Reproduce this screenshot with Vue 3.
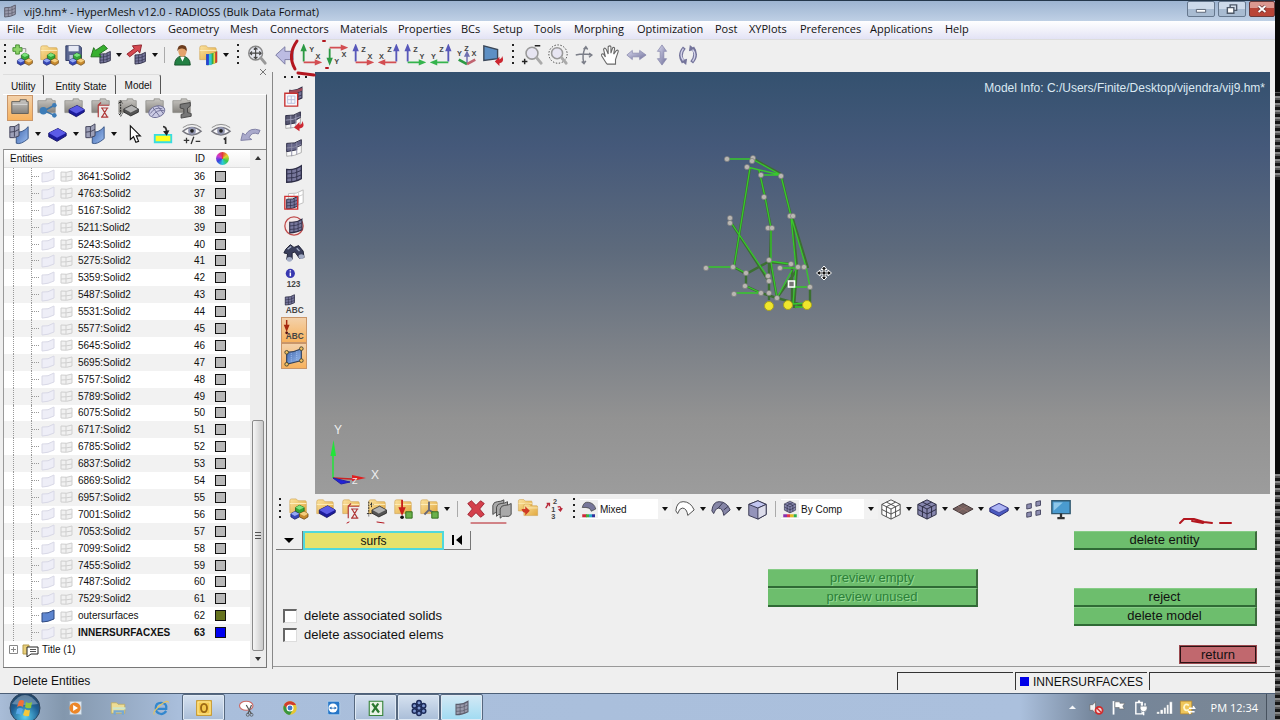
<script setup>
import { h, ref } from 'vue'

const menus = ['File', 'Edit', 'View', 'Collectors', 'Geometry', 'Mesh', 'Connectors', 'Materials', 'Properties', 'BCs', 'Setup', 'Tools', 'Morphing', 'Optimization', 'Post', 'XYPlots', 'Preferences', 'Applications', 'Help']

// Letters drawn on top of an icon: [text, x, y, class]
const letters = {
  'view-xy': [['Y', 10, 9, 'ax'], ['X', 17, 16, 'ax']],
  'view-yx': [['Y', 9, 22, 'ax'], ['X', 17, 14, 'ax']],
  'view-xz': [['Z', 10, 9, 'ax'], ['X', 17, 16, 'ax']],
  'view-zx': [['Z', 10, 9, 'ax'], ['X', 1, 16, 'ax']],
  'view-yz': [['Z', 10, 9, 'ax'], ['Y', 17, 16, 'ax']],
  'view-zy': [['Z', 10, 9, 'ax'], ['Y', 1, 16, 'ax']],
  'view-iso': [['Z', 9, 8, 'ax'], ['Y', 1, 13, 'ax'], ['X', 17, 13, 'ax']],
  'info-num': [['123', 4, 22, 'num']],
  'mesh-abc': [['ABC', 3, 22, 'num']],
  'load-abc': [['ABC', 3, 22, 'num']],
  renumber: [['2', 11, 7, 'ax'], ['1', 9, 15, 'ax'], ['3', 9, 23, 'ax']],
}
const Icon = (props) => h('svg', { viewBox: '0 0 24 24' }, [
  h('use', { href: '#' + props.name }),
  ...(letters[props.name] || []).map(([t, x, y, c]) => h('text', { x, y, class: c }, t)),
])
Icon.props = ['name']

const topTools = ['|grip', 'new-model', 'open-model', 'save-model', 'import', '|arrow', 'export', '|arrow', '|sep', 'user', 'load-results', '|arrow', '|grip', 'fit', 'back', 'view-xy', 'view-yx', 'view-xz', 'view-zx', 'view-yz', 'view-zy', 'view-iso', 'reverse-view', '|grip', 'zoom-in-out', 'zoom-circle', 'rotate', 'pan', 'arrows-h', 'arrows-v', 'spin']
const browserViews = ['folder', 'folder-share', 'folder-comp', 'folder-load', 'folder-prop', 'folder-mat', 'folder-beam']
const browserTools = ['surf-mesh', '|arrow', 'comp', '|arrow', 'surf-mesh', '|arrow', 'pointer', 'highlight', 'eye-pm', 'eye-one', 'undo']
const sideTools = ['mask', 'mask-reverse', 'mask-adjacent', 'mesh', 'mask-window', 'mesh-circle', 'binoculars', 'info-num', 'mesh-abc', 'load-abc', 'surf-handles']
const displayA = ['|grip', 'new-collector', 'new-comp', 'new-load', 'new-prop', 'new-force', 'new-system', '|arrow', '|sep', 'delete', 'cards', 'organize', 'renumber', '|grip']
const displayB = ['surf-wire', '|arrow', 'surf-shaded', '|arrow', 'cube-face', '|sep']
const displayC = ['cube-wire', '|arrow', 'cube-mesh', '|arrow', 'shell-flat', '|arrow', 'comp-light', '|arrow', 'shrink', 'monitor']

const solidIds = [3641, 4763, 5167, 5211, 5243, 5275, 5359, 5487, 5531, 5577, 5645, 5695, 5757, 5789, 6075, 6717, 6785, 6837, 6869, 6957, 7001, 7053, 7099, 7455, 7487, 7529]
const entities = [
  ...solidIds.map((n, i) => ({ name: `${n}:Solid2`, id: 36 + i, color: 'grey' })),
  { name: 'outersurfaces', id: 62, color: 'olive', shown: true },
  { name: 'INNERSURFACXES', id: 63, color: 'blue', current: true },
]

const taskbar = [
  { icon: 'media', label: 'Media player' },
  { icon: 'explorer', label: 'Explorer' },
  { icon: 'ie', label: 'Internet Explorer' },
  { icon: 'outlook', label: 'Outlook', open: true },
  { icon: 'snip', label: 'Snipping tool' },
  { icon: 'chrome', label: 'Chrome' },
  { icon: 'viewer', label: 'TeamViewer' },
  { icon: 'excel', label: 'Excel', open: true },
  { icon: 'flower', label: 'Meeting', open: true },
  { icon: 'app-mesh', label: 'HyperMesh', open: true, active: true },
]
const tray = ['tray-up', 'tray-mute', 'tray-flag', 'tray-power', 'tray-signal', 'tray-sync']

const joints = [[727, 159], [753, 158], [752, 161], [747, 167], [761, 175], [781, 176], [764, 197], [768, 228], [772, 228], [790, 216], [793, 216], [769, 260], [733, 267], [706, 268], [730, 218], [730, 223], [746, 273], [768, 276], [769, 281], [745, 286], [734, 294], [761, 293], [769, 293], [777, 298], [780, 268], [791, 264], [798, 267], [804, 267], [810, 287]]

const solids = ref(false)
const elems = ref(false)
</script>

<template>
  <svg class="defs" aria-hidden="true">
    <linearGradient id="g-surf" x1="0" y1="0" x2="1" y2="1"><stop offset="0" stop-color="#3f66ad" /><stop offset="1" stop-color="#9dbef0" /></linearGradient>
    <linearGradient id="g-fold" x1="0" y1="0" x2="1" y2="1"><stop offset="0" stop-color="#fbe3a0" /><stop offset="1" stop-color="#e2a83e" /></linearGradient>
    <linearGradient id="g-gfold" x1="0" y1="0" x2="0" y2="1"><stop offset="0" stop-color="#c9c7c3" /><stop offset="1" stop-color="#85827d" /></linearGradient>
    <linearGradient id="g-lav" x1="0" y1="0" x2="1" y2="1"><stop offset="0" stop-color="#d8d8ee" /><stop offset="1" stop-color="#70709a" /></linearGradient>
    <symbol id="mesh" viewBox="0 0 24 24"><path d="M4 7Q13 8 20 3V17Q13 21 4 21Z" fill="#77779c" stroke="#2d2d46" stroke-width="1.4" /><path d="M4 12Q13 12 20 8M4 16.500Q13 17 20 13M9.500 7V21M15 6V19" fill="none" stroke="#30304c" /></symbol>
    <symbol id="app-mesh" viewBox="0 0 24 24"><path d="M4 7Q13 8 20 3V17Q13 21 4 21Z" fill="#999aab" stroke="#5b5c6b" stroke-width="1.400" /><path d="M4 12Q13 12 20 8M4 16.500Q13 17 20 13M9.500 7V21M15 6V19" fill="none" stroke="#5b5c6b" /></symbol>
    <symbol id="fold" viewBox="0 0 24 24"><path d="M3 4Q3 2 5 2H10L12 4H20Q21 4 21 6V17H3Z" fill="url(#g-fold)" stroke="#c9983f" stroke-width=".6" /><path d="M3 7H21" stroke="#fff0c0" /></symbol>
    <symbol id="gfold" viewBox="0 0 24 24"><path d="M2 4H11V2H17L18 4H21V17H2Z" fill="url(#g-gfold)" stroke="#8b8985" stroke-width=".8" /></symbol>
    <symbol id="comp" viewBox="0 0 24 24"><path d="M3 11L13 6L22 11V14L12 20L3 15Z" fill="#1c1c9c" stroke="#101060" /><path d="M3 11L13 6L22 11L12 16Z" fill="#5b5be6" /></symbol>
    <symbol id="comp-light" viewBox="0 0 24 24"><path d="M2 11L12 6L22 11V14L12 20L2 15Z" fill="#4a5ac0" stroke="#20206b" /><path d="M2 11L12 6L22 11L12 16Z" fill="#aeb6f4" stroke="#30308a" stroke-width=".7" /></symbol>
    <symbol id="gbox" viewBox="0 0 24 24"><path d="M3 11L13 6L22 11V15L12 20L3 15Z" fill="#555" stroke="#222" /><path d="M3 11L13 6L22 11L12 16Z" fill="#b3b3b3" stroke="#333" stroke-width=".6" /></symbol>
    <symbol id="tri" viewBox="0 0 24 20"><path d="M7 4L12 1L18 4V9L12 12L7 9Z" fill="#35a535" stroke="#145c14" /><path d="M7 4L12 7L18 4L12 1Z" fill="#7ce27c" /><path d="M1 12L6 9L12 12V16L6 19L1 16Z" fill="#3547b8" stroke="#1d2566" /><path d="M1 12L6 15L12 12L6 9Z" fill="#94a8f2" /><path d="M12 12L18 9L23 12V16L18 19L12 16Z" fill="#c78a2e" stroke="#6e4714" /><path d="M12 12L18 15L23 12L18 9Z" fill="#f5ce7d" /></symbol>
    <symbol id="new-model" viewBox="0 0 24 24"><use href="#tri" x="5" y="9" width="18" height="15" /><path d="M4 1H8V4H11V8H8V11H4V8H1V4H4Z" fill="#8ed46a" stroke="#3c8a28" /><path d="M11 5H15V9" fill="none" stroke="#888" /></symbol>
    <symbol id="open-model" viewBox="0 0 24 24"><use href="#fold" /><use href="#tri" x="5" y="9" width="18" height="15" /></symbol>
    <symbol id="save-model" viewBox="0 0 24 24"><path d="M2 2H17L19 4V18H2Z" fill="#5a6690" stroke="#2e3860" /><path d="M5 2H16V8H5Z" fill="#e6e9f4" /><path d="M6 12H15V18H6Z" fill="#b9c2dc" /><use href="#tri" x="5" y="9" width="18" height="15" /></symbol>
    <symbol id="import" viewBox="0 0 24 24"><use href="#mesh" x="8" y="6" width="17" height="17" /><path d="M15 1L19 5L10 11L12 14L1 14L4 4L6 7Z" fill="#37b02f" stroke="#1c6c18" /></symbol>
    <symbol id="export" viewBox="0 0 24 24"><use href="#mesh" x="7" y="7" width="17" height="17" /><path d="M1 11L9 5L7 2L17 1L15 10L13 7L4 14Z" fill="#d44850" stroke="#8c1f28" /></symbol>
    <symbol id="user" viewBox="0 0 24 24"><path d="M4 23Q4 14 12 13Q21 14 21 23Z" fill="#238044" stroke="#145028" /><path d="M10 14L12.500 19L15 14Z" fill="#fff" /><ellipse cx="12.500" cy="8" rx="4.500" ry="6" fill="#e3a36c" /><path d="M7 8Q7 1 12 1Q18 1 17 8Q15 4 11 5Q8 5 7 8" fill="#6c3d1e" /></symbol>
    <symbol id="load-results" viewBox="0 0 24 24"><use href="#fold" /><path d="M10 11Q15 12 22 8V20Q15 24 10 23Z" fill="#2dae4a" /><path d="M10 11H13V23H10Z" fill="#2a3fd8" /><path d="M13 11L16 11V23H13Z" fill="#36c4d4" /><path d="M18 10L20 9V21L18 22Z" fill="#f0d23c" /><path d="M20 9L22 8V20L20 21Z" fill="#d8352d" /></symbol>
    <symbol id="fit" viewBox="0 0 24 24"><circle cx="10.500" cy="10" r="7.500" fill="#e4e6ef" stroke="#888" stroke-width="1.600" /><path d="M16 15L21 21" stroke="#999" stroke-width="3" stroke-linecap="round" /><path d="M10.500 4V16M4.500 10H16.500M8.500 6L10.500 4L12.500 6M8.500 14L10.500 16L12.500 14M6.500 8L4.500 10L6.500 12M14.500 8L16.500 10L14.500 12" fill="none" stroke="#444" stroke-width="1.200" /></symbol>
    <symbol id="back" viewBox="0 0 24 24"><path d="M3 12L13 3V8H22V17H13V22Z" fill="#bcbce2" stroke="#77779f" /></symbol>
    <symbol id="view-xy" viewBox="0 0 24 24"><path d="M4 19V4M2 7L4 2L6 7Z" stroke="#2c9a44" fill="#2c9a44" stroke-width="2" /><path d="M4 20H19M17 18L22 20L17 22Z" stroke="#d34e52" fill="#d34e52" stroke-width="1.800" /></symbol>
    <symbol id="view-yx" viewBox="0 0 24 24"><path d="M4 5V18M2 16L4 21L6 16Z" stroke="#2c9a44" fill="#2c9a44" stroke-width="2" /><path d="M4 4H18M17 2L22 4L17 6Z" stroke="#d34e52" fill="#d34e52" stroke-width="1.800" /></symbol>
    <symbol id="view-xz" viewBox="0 0 24 24"><path d="M4 19V4M2 7L4 2L6 7Z" stroke="#5858ba" fill="#5858ba" stroke-width="2" /><path d="M4 20H19M17 18L22 20L17 22Z" stroke="#d34e52" fill="#d34e52" stroke-width="1.800" /></symbol>
    <symbol id="view-zx" viewBox="0 0 24 24"><path d="M20 19V4M18 7L20 2L22 7Z" stroke="#5858ba" fill="#5858ba" stroke-width="2" /><path d="M20 20H5M7 18L2 20L7 22Z" stroke="#d34e52" fill="#d34e52" stroke-width="1.800" /></symbol>
    <symbol id="view-yz" viewBox="0 0 24 24"><path d="M4 19V4M2 7L4 2L6 7Z" stroke="#5858ba" fill="#5858ba" stroke-width="2" /><path d="M4 20H19M17 18L22 20L17 22Z" stroke="#35b44d" fill="#35b44d" stroke-width="1.800" /></symbol>
    <symbol id="view-zy" viewBox="0 0 24 24"><path d="M20 19V4M18 7L20 2L22 7Z" stroke="#5858ba" fill="#5858ba" stroke-width="2" /><path d="M20 20H5M7 18L2 20L7 22Z" stroke="#35b44d" fill="#35b44d" stroke-width="1.800" /></symbol>
    <symbol id="view-iso" viewBox="0 0 24 24"><path d="M12 21V11M10 13L12 9L14 13Z" stroke="#7070b0" fill="#7070b0" stroke-width="1.600" /><path d="M12 22L3 17" stroke="#2c9a44" stroke-width="3" /><path d="M12 22L21 17" stroke="#c06470" stroke-width="3" /></symbol>
    <symbol id="reverse-view" viewBox="0 0 24 24"><path d="M2 2L17 6V16L2 18Z" fill="#5d8fc4" stroke="#3b4758" stroke-width="1.500" /><path d="M14 19L19 14V17Q22 16 22 13Q25 20 19 21V24Z" fill="#cc2630" /></symbol>
    <symbol id="zoom-in-out" viewBox="0 0 24 24"><circle cx="12" cy="10" r="6.500" fill="#e7e5f2" stroke="#999" stroke-width="1.700" /><path d="M17 15L22 21" stroke="#aaa" stroke-width="3" stroke-linecap="round" /><path d="M15 2H21M1 19H7M4 16V22" stroke="#222" stroke-width="1.600" /></symbol>
    <symbol id="zoom-circle" viewBox="0 0 24 24"><circle cx="12" cy="11" r="10" fill="none" stroke="#333" stroke-dasharray="1.500 1.800" /><circle cx="11" cy="10" r="6" fill="#e7e5f2" stroke="#999" stroke-width="1.700" /><path d="M16 15L21 21" stroke="#aaa" stroke-width="3" stroke-linecap="round" /></symbol>
    <symbol id="rotate" viewBox="0 0 24 24"><path d="M14 3Q9 12 12 21M3 12Q12 10 20 12M11.500 6L14 3L16 6M17.500 10L20.500 12L17.500 14.500M9.500 19L12 21.500L14 18.500" fill="none" stroke="#7b7e88" stroke-width="1.600" /></symbol>
    <symbol id="pan" viewBox="0 0 24 24"><path d="M8 21L3 13Q2 10 5 11L7 14L5 6Q6 3 8 6L10 11V3Q12 1 13 3V10L15 4Q17 3 17 5L16 11L19 7Q21 6 21 8L18 17V22H9Z" fill="#fff" stroke="#6a6a6a" stroke-width="1.200" /></symbol>
    <symbol id="arrows-h" viewBox="0 0 24 24"><path d="M2 12L8 7V10H16V7L23 12L16 17V14H8V17Z" fill="url(#g-lav)" stroke="#8686ac" stroke-width=".8" /></symbol>
    <symbol id="arrows-v" viewBox="0 0 24 24"><path d="M12 1L17 8H14V16H17L12 23L7 16H10V8H7Z" fill="url(#g-lav)" stroke="#8686ac" stroke-width=".8" /></symbol>
    <symbol id="spin" viewBox="0 0 24 24"><path d="M8 4Q1 12 7 20M16 20Q23 12 17 4" fill="none" stroke="#74749b" stroke-width="4" /><path d="M4 18L11 16L10 23ZM20 6L13 8L14 1Z" fill="#74749b" /><path d="M7 5Q2 12 7 18M17 19Q22 12 17 6" fill="none" stroke="#d3d3ea" stroke-width="1.500" /></symbol>
    <symbol id="folder" viewBox="0 0 24 24"><path d="M3 5H12V3H19V5H21V18H3Z" fill="url(#g-gfold)" stroke="#5f5d59" /><path d="M4 8H20" stroke="#ddd" /></symbol>
    <symbol id="folder-share" viewBox="0 0 24 24"><use href="#gfold" /><path d="M9 15L20 9M9 15L20 20" stroke="#3d75a8" stroke-width="1.600" /><circle cx="8" cy="15" r="4" fill="#3c7cb8" /><circle cx="20" cy="9" r="2.500" fill="#3c7cb8" /><circle cx="20" cy="20" r="2.500" fill="#3c7cb8" /></symbol>
    <symbol id="folder-comp" viewBox="0 0 24 24"><use href="#gfold" /><use href="#comp" x="4" y="4" width="21" height="21" /></symbol>
    <symbol id="loadg" viewBox="0 0 24 24"><path d="M9 22V9H21M9 9L12 6M12 12H20M12 22H20M13 12L19 22M19 12L13 22" fill="none" stroke="#b03a3a" stroke-width="1.300" /></symbol>
    <symbol id="folder-load" viewBox="0 0 24 24"><use href="#gfold" /><path d="M9 9H22V23H9Z" fill="#eee" /><use href="#loadg" /></symbol>
    <symbol id="folder-prop" viewBox="0 0 24 24"><use href="#gfold" /><path d="M4 5V20M2 7L4 4L6 7M2 18L4 21L6 18" stroke="#111" fill="none" stroke-dasharray="2 1" /><use href="#gbox" x="5" y="4" width="20" height="20" /></symbol>
    <symbol id="folder-mat" viewBox="0 0 24 24"><use href="#gfold" /><ellipse cx="14" cy="16" rx="9" ry="6" fill="#cbcbe4" stroke="#6b6b93" transform="rotate(-18 14 16)" /><path d="M7 18Q12 10 20 13M9 21Q14 13 22 15M10 12L17 21M15 10L21 18" stroke="#6b6b93" fill="none" /></symbol>
    <symbol id="folder-beam" viewBox="0 0 24 24"><use href="#gfold" /><path d="M10 8L21 6V10L18 12V17L22 18V21L11 23V19L14 18V13L10 12Z" fill="#777" stroke="#444" /></symbol>
    <symbol id="surf-mesh" viewBox="0 0 24 24"><path d="M9 9Q15 12 22 4V17Q14 24 9 22Z" fill="url(#g-surf)" stroke="#325082" /><path d="M2 4Q8 5 12 1V14Q7 17 2 16Z" fill="#9da0b8" stroke="#3e4056" /><path d="M2 10Q8 10 12 7M7 4V15" fill="none" stroke="#3e4056" /></symbol>
    <symbol id="pointer" viewBox="0 0 24 24"><path d="M8 3V18L11.500 15L14 21L17 20L14.500 14H19Z" fill="#fff" stroke="#111" stroke-width="1.200" /></symbol>
    <symbol id="highlight" viewBox="0 0 24 24"><path d="M3 13H21V21H3Z" fill="#ffff1e" stroke="#38dce2" stroke-width="2" /><path d="M12 4Q16 4 16 11" fill="none" stroke="#333" stroke-width="2" /><path d="M12 9L16 14L19 8Z" fill="#222" /></symbol>
    <symbol id="eye" viewBox="0 0 24 24"><path d="M2 9Q12 1 22 9Q12 17 2 9Z" fill="#f7f7fa" stroke="#77777f" stroke-width="1.500" /><circle cx="12" cy="8.500" r="4.200" fill="#9296b0" /><circle cx="12" cy="8.500" r="2" fill="#222" /><path d="M2 5Q12 -2 22 5" fill="none" stroke="#888" /></symbol>
    <symbol id="eye-pm" viewBox="0 0 24 24"><use href="#eye" /><path d="M3 19H9M6 16V22M14 15L11 23M16 20H21" stroke="#333" stroke-width="1.400" /></symbol>
    <symbol id="eye-one" viewBox="0 0 24 24"><use href="#eye" /><path d="M15 18L17 16.500V23" fill="none" stroke="#333" stroke-width="1.800" /></symbol>
    <symbol id="undo" viewBox="0 0 24 24"><path d="M2 19L4 11L7 13Q12 4 23 8L21 12Q14 9 11 16L14 18Z" fill="#a9a9cb" stroke="#7e7ea3" /></symbol>
    <symbol id="mask" viewBox="0 0 24 24"><use href="#mesh" x="4" y="0" width="20" height="20" /><path d="M7 6Q15 6 21 3V6Q15 9 7 9Z" fill="#a04a58" /><path d="M2 9H16V23H2Z" fill="#f8f8fc" stroke="#c83232" stroke-width="1.500" /><path d="M5 16H13M9 12V20M5 12H13V20H5Z" fill="none" stroke="#b6c0dc" /></symbol>
    <symbol id="mask-reverse" viewBox="0 0 24 24"><path d="M3 5Q12 6 19 1V15Q12 19 3 19Z" fill="#f7f7f7" stroke="#aaa" /><path d="M3 5Q12 6 19 1V7L14 10V13L3 15Z" fill="#55556f" stroke="#2d2d46" /><path d="M3 10Q12 10 19 6M8.500 5V19M14 4V17" fill="none" stroke="#9c9cb8" /><path d="M12 18L18 12V15Q21 15 21 11Q25 18 18 19V22Z" fill="#cc2832" /></symbol>
    <symbol id="mask-adjacent" viewBox="0 0 24 24"><path d="M4 7Q13 8 20 3V17Q13 21 4 21Z" fill="#fbfbfb" stroke="#aaa" /><path d="M4 7Q13 8 20 3V9L15 11V14L4 16Z" fill="#666689" stroke="#2d2d46" /><path d="M4 12Q13 12 20 8M9.500 7V21M15 6V19" fill="none" stroke="#8e8ea6" /></symbol>
    <symbol id="mask-window" viewBox="0 0 24 24"><path d="M6 5Q15 6 22 1V15Q15 19 6 19Z" fill="#fff" stroke="#bbb" /><path d="M6 10Q15 10 22 6M12 5V18M17 4V16" fill="none" stroke="#ccc" /><use href="#mesh" x="1" y="6" width="18" height="18" /><path d="M2 8H16V22H2Z" fill="none" stroke="#d03030" stroke-width="1.500" /></symbol>
    <symbol id="mesh-circle" viewBox="0 0 24 24"><circle cx="12" cy="12" r="10" fill="#f3e9e9" stroke="#bf4b4b" stroke-width="1.400" /><use href="#mesh" x="4" y="2" width="20" height="20" /></symbol>
    <symbol id="binoculars" viewBox="0 0 24 24"><path d="M3 9L8 4L12 7L17 5L22 11L23 18L18 19L13 12L10 13L10 20L4 20L5 14L1 13Z" fill="#3a3f5c" stroke="#1a1d30" /><ellipse cx="7" cy="20" rx="3" ry="2.500" fill="#a4adc6" /><ellipse cx="20" cy="17" rx="3" ry="2.500" fill="#a4adc6" /><path d="M5 9L9 6M15 8L18 11" stroke="#a4adc6" stroke-width="1.500" /></symbol>
    <symbol id="info-num" viewBox="0 0 24 24"><circle cx="8" cy="7" r="5" fill="#3838b0" /><path d="M8 6V10M8 3.500V5" stroke="#fff" stroke-width="1.600" /></symbol>
    <symbol id="mesh-abc" viewBox="0 0 24 24"><use href="#mesh" x="0" y="0" width="15" height="15" /></symbol>
    <symbol id="load-abc" viewBox="0 0 24 24"><path d="M4 1V10M2 7L4 12L6 7Z" stroke="#a5280f" fill="#a5280f" stroke-width="1.600" /><circle cx="4" cy="15" r="1.500" fill="#511" /></symbol>
    <symbol id="surf-handles" viewBox="0 0 24 24"><path d="M4 8Q12 8 20 4V17Q12 19 4 21Z" fill="url(#g-surf)" stroke="#33435e" stroke-width="1.300" /><path d="M9 9V19M15 7V17" stroke="#a8c6f4" stroke-dasharray="1 1" /><g fill="#f0c060" stroke="#443"><circle cx="4" cy="8" r="2" /><circle cx="20" cy="4" r="2" /><circle cx="20" cy="17" r="2" /><circle cx="4" cy="21" r="2" /></g></symbol>
    <symbol id="new-collector" viewBox="0 0 24 24"><use href="#fold" x="-1" y="-1" /><use href="#tri" x="2" y="7" width="21" height="17" /></symbol>
    <symbol id="new-comp" viewBox="0 0 24 24"><use href="#fold" /><use href="#comp" x="3" y="3" width="22" height="22" /></symbol>
    <symbol id="new-load" viewBox="0 0 24 24"><use href="#fold" /><path d="M9 9H22V23H9Z" fill="#eee" /><use href="#loadg" /></symbol>
    <symbol id="new-prop" viewBox="0 0 24 24"><use href="#fold" /><path d="M3 4V20M1 17H6M6 5V10M4.500 7H8" stroke="#222" fill="none" stroke-dasharray="2 1" /><use href="#gbox" x="3" y="4" width="22" height="20" /></symbol>
    <symbol id="new-force" viewBox="0 0 24 24"><use href="#fold" /><path d="M11 2V14M8.500 11L11 17L13.500 11Z" stroke="#c8201c" fill="#c8201c" stroke-width="2" /><circle cx="11" cy="21" r="2" fill="#111" /><path d="M15 15H22V22H15Z" fill="#6ab04a" stroke="#2e6a1c" /></symbol>
    <symbol id="new-system" viewBox="0 0 24 24"><use href="#fold" /><path d="M12 4V13L7 18M12 13L17 16" stroke="#667" fill="none" stroke-width="2" /><path d="M15 15H22V22H15Z" fill="#6ab04a" stroke="#2e6a1c" /></symbol>
    <symbol id="delete" viewBox="0 0 24 24"><path d="M3 6L7 3L12 8L17 3L21 6L16 12L21 18L17 21L12 16L7 21L3 18L8 12Z" fill="#d4404c" stroke="#9c2230" /></symbol>
    <symbol id="cards" viewBox="0 0 24 24"><g fill="#a9a9a9" stroke="#444"><path d="M2 8Q3 4 7 4T14 2V14Q12 17 8 16T2 18Z" /><path d="M6 10Q7 6 11 6T18 4V16Q16 19 12 18T6 20Z" /><path d="M10 12Q11 8 15 8T22 6V18Q20 21 16 20T10 22Z" /></g></symbol>
    <symbol id="organize" viewBox="0 0 24 24"><use href="#fold" x="-1" y="0" width="20" height="20" /><use href="#fold" x="5" y="5" width="20" height="20" /><path d="M5 12H9V9L14 14L9 19V16Q6 16 5 12Z" fill="#cf3a24" /></symbol>
    <symbol id="renumber" viewBox="0 0 24 24"><path d="M3 11L6 6M4 6H7V9M16 10Q20 8 19 13M17 12L19 14L21 11" fill="none" stroke="#b82a3a" stroke-width="1.500" /></symbol>
    <symbol id="surf-wire" viewBox="0 0 24 24"><path d="M2 14Q3 4 10 4Q18 4 22 13L15 19Q14 11 9 11Q6 11 4 17Z" fill="#fff" stroke="#444" /></symbol>
    <symbol id="surf-shaded" viewBox="0 0 24 24"><path d="M2 14Q3 4 10 4Q18 4 22 13L15 19Q14 11 9 11Q6 11 4 17Z" fill="#8585a6" stroke="#33334d" /><path d="M9 11L14 5M15 13L20 9" fill="none" stroke="#33334d" /></symbol>
    <symbol id="cube-face" viewBox="0 0 24 24"><path d="M3 7L13 3L22 7V18L13 23L3 19Z" fill="#9494ba" stroke="#33334d" /><path d="M3 7L13 3L22 7L13 11Z" fill="#c2c6f0" stroke="#33334d" /><path d="M13 11L22 7V18L13 23Z" fill="#dcdcea" stroke="#33334d" /></symbol>
    <symbol id="cube-wire" viewBox="0 0 24 24"><path d="M2 7L12 2L22 7V18L12 23L2 18Z" fill="#fff" stroke="#444" /><path d="M2 7L12 12L22 7M12 12V23M2 12.500L12 17.500L22 12.500M7 4.500L17 9.500V20.500M17 4.500L7 9.500V20.500" fill="none" stroke="#444" /></symbol>
    <symbol id="cube-mesh" viewBox="0 0 24 24"><path d="M2 7L12 2L22 7V18L12 23L2 18Z" fill="#8686ae" stroke="#26263c" /><path d="M2 7L12 12L22 7M12 12V23M2 12.500L12 17.500L22 12.500M7 4.500L17 9.500V20.500M17 4.500L7 9.500V20.500" fill="none" stroke="#26263c" /></symbol>
    <symbol id="shell-flat" viewBox="0 0 24 24"><path d="M1 12L12 6L23 12L12 18Z" fill="#74605f" stroke="#3c2f30" /><path d="M6.500 9L18 15M17 9L6 15" stroke="#8f6f6a" /></symbol>
    <symbol id="shrink" viewBox="0 0 24 24"><g fill="#8c8cb0" stroke="#44445f"><path d="M3 7L8 6V11L3 12ZM13 4L18 3V8L13 9ZM3 16L8 15V20L3 21ZM13 14L18 13V18L13 19Z" /></g></symbol>
    <symbol id="monitor" viewBox="0 0 24 24"><path d="M2 3H22V17H2Z" fill="#4a9bd0" stroke="#31586f" stroke-width="1.500" /><path d="M4 5H14L4 14Z" fill="#8ec8ea" /><path d="M12 17V22M8 22H16" stroke="#333" stroke-width="2.500" /></symbol>
    <symbol id="mode-geom" viewBox="0 0 24 24"><path d="M3 10Q5 2 11 3Q19 4 21 12L15 15Q14 9 3 10Z" fill="#77779a" stroke="#444" /><path d="M3 19H9V23H3Z" fill="#d02838" /><path d="M8 19H12V23H8Z" fill="#3fae41" /><path d="M12 19H16V23H12Z" fill="#28a8cc" /><path d="M16 19H20V23H16Z" fill="#31319c" /></symbol>
    <symbol id="mode-elem" viewBox="0 0 24 24"><use href="#cube-mesh" x="3" y="0" width="18" height="18" /><path d="M3 19H8V23H3Z" fill="#8c31ae" /><path d="M8 19H12V23H8Z" fill="#e63b47" /><path d="M12 19H17V23H12Z" fill="#e5be25" /><path d="M17 19H21V23H17Z" fill="#31b04a" /></symbol>
    <symbol id="media" viewBox="0 0 24 24"><path d="M5 3H21V21H5Z" fill="#dbe6f1" stroke="#93a5b8" /><circle cx="12" cy="12" r="7.500" fill="#ec8628" /><path d="M9.500 8L16 12L9.500 16Z" fill="#fff" /></symbol>
    <symbol id="explorer" viewBox="0 0 24 24"><path d="M3 5H10L12 7H21V19H3Z" fill="#eedd94" stroke="#b9a85d" /><path d="M5 11H22V14H5Z" fill="#cfe6c9" /><path d="M6 15H20V21H17V18H9V21H6Z" fill="#77a8d2" /></symbol>
    <symbol id="ie" viewBox="0 0 24 24"><path d="M19 16Q16 20 12 20Q5 19 5 12Q5 5 12 5Q20 5 19 13H7" fill="none" stroke="#3387ce" stroke-width="3" /><path d="M3 21Q0 18 10 9Q21 0 22 5" fill="none" stroke="#e3c463" stroke-width="1.500" /></symbol>
    <symbol id="outlook" viewBox="0 0 24 24"><path d="M2 2H22V22H2Z" fill="#f4c84d" stroke="#c28e1e" /><path d="M4 4H20V20H4Z" fill="none" stroke="#fff1b0" /><ellipse cx="12" cy="12" rx="4" ry="5.500" fill="none" stroke="#9c6814" stroke-width="2.500" /></symbol>
    <symbol id="snip" viewBox="0 0 24 24"><ellipse cx="11" cy="9" rx="9" ry="6" fill="#fff" stroke="#cc6863" stroke-width="1.500" /><path d="M11 8L18 20M18 8L13 20" stroke="#555" stroke-width="1.600" /><circle cx="18" cy="21" r="2" fill="none" stroke="#555" /><circle cx="13" cy="21" r="2" fill="none" stroke="#555" /></symbol>
    <symbol id="chrome" viewBox="0 0 24 24"><circle cx="12" cy="12" r="9" fill="#e6c733" /><path d="M4 8A9 9 0 0 1 20 8H12L8 14Z" fill="#d23c2d" /><path d="M4 8A9 9 0 0 0 12 21L16 14H9Z" fill="#38963f" /><circle cx="12" cy="12" r="4" fill="#3f79c8" stroke="#fff" stroke-width="1.500" /></symbol>
    <symbol id="viewer" viewBox="0 0 24 24"><path d="M5 3H19Q21 3 21 6V21H7L5 19Z" fill="#2676c8" stroke="#bfdaf0" /><circle cx="12" cy="12" r="6" fill="#fff" /><path d="M7 12L10 10V11.500H14V10L17 12L14 14V12.500H10V14Z" fill="#1d68b6" /></symbol>
    <symbol id="excel" viewBox="0 0 24 24"><path d="M3 3H21V22H3Z" fill="#e9f3e6" stroke="#39853c" stroke-width="1.500" /><path d="M7 6L16 18M15 6L7 18" stroke="#2b7830" stroke-width="3" /></symbol>
    <symbol id="flower" viewBox="0 0 24 24"><g fill="#7d96cf" stroke="#1c2a58" stroke-width="2"><circle cx="12" cy="5" r="3" /><circle cx="18" cy="9" r="3" /><circle cx="18" cy="16" r="3" /><circle cx="12" cy="19" r="3" /><circle cx="6" cy="16" r="3" /><circle cx="6" cy="9" r="3" /><circle cx="12" cy="12" r="3" /></g></symbol>
    <symbol id="tray-up" viewBox="0 0 24 24"><path d="M7 14L12 9L17 14Z" fill="#f4f6f9" /></symbol>
    <symbol id="tray-mute" viewBox="0 0 24 24"><path d="M4 8H8L12 4V20L8 16H4Z" fill="#f2f2f2" stroke="#666" /><circle cx="17" cy="16" r="5" fill="#f5dcdc" stroke="#d22c2c" stroke-width="2.500" /><path d="M13.500 12.500L20.500 19.500" stroke="#d22c2c" stroke-width="2" /></symbol>
    <symbol id="tray-flag" viewBox="0 0 24 24"><path d="M5 3V22" stroke="#fff" stroke-width="2.500" /><path d="M7 4H14V6H21L18 10L20 14H13V12H7Z" fill="#fff" stroke="#666" stroke-width=".8" /></symbol>
    <symbol id="tray-power" viewBox="0 0 24 24"><path d="M4 5H13V21H4Z" fill="none" stroke="#fff" stroke-width="2" /><path d="M7 2H10V5H7Z" fill="#fff" /><path d="M12 6V11M17 6V11" stroke="#fff" stroke-width="2" /><path d="M10 10H20V14Q19 18 15 18Q11 18 10 14Z" fill="#fff" stroke="#65717f" /><path d="M15 18V23" stroke="#fff" stroke-width="2" /></symbol>
    <symbol id="tray-signal" viewBox="0 0 24 24"><path d="M1 18H5V21H1ZM6 15H10V21H6ZM11 12H14V21H11ZM15 8H18V21H15ZM19 4H23V21H19Z" fill="#fff" stroke="#5b6876" stroke-width=".4" /></symbol>
    <symbol id="tray-sync" viewBox="0 0 24 24"><path d="M2 3H18V21H2Z" fill="#efc65a" stroke="#b5862a" /><path d="M14 9Q8 5 7 12Q8 18 14 15" fill="none" stroke="#fff7cf" stroke-width="2.500" /><path d="M14 13H22L20 10M22 18H14L16 21" fill="none" stroke="#fff" stroke-width="2" /></symbol>
  </svg>

  <div class="screen">
    <div class="app">
      <header class="title">
        <Icon class="i16" name="app-mesh" />
        <span>vij9.hm* - HyperMesh v12.0 - RADIOSS (Bulk Data Format)</span>
        <div class="win">
          <button aria-label="Minimize"><svg viewBox="0 0 28 15"><path d="M9 8H19V11H9Z" fill="#fff" stroke="#555f70" /></svg></button>
          <button aria-label="Restore"><svg viewBox="0 0 28 15"><path d="M12 3H19V9H12Z" fill="#d6e0ec" stroke="#4d5868" stroke-width="1.500" /><path d="M9 6H16V12H9Z" fill="#fff" stroke="#4d5868" stroke-width="1.500" /></svg></button>
          <button class="close" aria-label="Close"><svg viewBox="0 0 28 15"><path d="M10 4L18 11M18 4L10 11" stroke="#6b3030" stroke-width="4" /><path d="M10 4L18 11M18 4L10 11" stroke="#fff" stroke-width="2.200" /></svg></button>
        </div>
      </header>

      <nav class="menu"><a v-for="m in menus" :key="m" href="#">{{ m }}</a></nav>

      <div class="bar top">
        <template v-for="(t, i) in topTools" :key="i">
          <span v-if="t[0] === '|'" :class="t.slice(1)"></span>
          <button v-else class="tool" :class="{ wide: t === 'back' }" :aria-label="t"><Icon :name="t" /></button>
        </template>
      </div>

      <div class="main">
        <aside class="browser">
          <div class="tabs">
            <button>Utility</button><button>Entity State</button><button class="on">Model</button>
            <button class="x" aria-label="Close browser"><svg viewBox="0 0 8 8"><path d="M1 1L7 7M7 1L1 7" stroke="#777" /></svg></button>
          </div>
          <div class="pane">
            <div class="views">
              <button v-for="(t, i) in browserViews" :key="t" class="tool" :class="{ lit: i === 0 }" :aria-label="t"><Icon :name="t" /></button>
            </div>
            <div class="views second">
              <template v-for="(t, i) in browserTools" :key="i">
                <span v-if="t[0] === '|'" :class="t.slice(1)"></span>
                <button v-else class="tool" :aria-label="t"><Icon :name="t" /></button>
              </template>
            </div>
            <div class="tree">
              <table>
                <thead>
                  <tr>
                    <th class="name">Entities</th><th class="id">ID</th>
                    <th class="sw"><span class="wheel"></span></th>
                  </tr>
                </thead>
                <tbody>
                  <tr v-for="e in entities" :key="e.id" :class="{ current: e.current }">
                    <td class="name">
                      <span class="g1"></span><span class="g2"></span>
                      <svg class="leaf" viewBox="0 0 14 14"><path d="M1 4Q7 5 13 1V10Q7 13 1 13Z" :class="e.shown ? 'solid' : 'pale'" /></svg>
                      <svg class="leaf" viewBox="0 0 14 14"><path d="M1 3Q7 4 12 2V11Q7 13 1 12ZM1 8Q7 8 12 7M6 3V12" class="pmesh" /></svg>
                      <span>{{ e.name }}</span>
                    </td>
                    <td class="id">{{ e.id }}</td>
                    <td class="sw"><span class="swatch" :class="e.color"></span></td>
                  </tr>
                  <tr>
                    <td class="name root">
                      <svg class="plus" viewBox="0 0 9 9"><path d="M.5 .5H8.500V8.500H.5ZM2 4.500H7M4.500 2V7" fill="#fff" stroke="#888" /></svg>
                      <svg class="leaf note" viewBox="0 0 17 14"><path d="M1 2H7V11H1Z" fill="#e9cf7a" stroke="#b49b4c" /><path d="M5 4H16V11H9L5 14V11Z" fill="#fff" stroke="#222" /><path d="M8 6.500H14M8 8.500H14" stroke="#555" /></svg>
                      <span>Title (1)</span>
                    </td>
                    <td class="id"></td><td class="sw"></td>
                  </tr>
                </tbody>
              </table>
              <div class="scroll"><span class="up"></span><span class="thumb"></span><span class="down"></span></div>
            </div>
          </div>
        </aside>

        <section class="work">
          <div class="stage">
            <div class="side">
              <span class="hgrip"></span>
              <button v-for="(t, i) in sideTools" :key="t" class="tool" :class="{ lit: i > 8 }" :aria-label="t"><Icon :name="t" /></button>
            </div>
            <div class="viewport">
              <svg class="scene" viewBox="315 72 955 422">
                <g fill="none" stroke="#3c6f32" stroke-width="3">
                  <path d="M752 158L781 174M781 175L791 216L797 267M750 168L734 267M759 170L765 197L771 228L770 260L777 298M730 221L768 280M734 267L746 274L768 262L791 264M746 274V286L761 293M769 262V300M792 216L797 267L794 308M792 216L808 268M799 267L777 298M792 264V305M810 287V304L795 307M761 293L777 298L806 306" stroke-width="2.400" />
                </g>
                <g fill="none" stroke="#37c92b" stroke-width="1.300">
                  <path d="M727 159H752L781 175M747 167L781 175H761M781 176L791 216L806 267L810 287M750 168L734 267H706M759 170L765 197L771 228V262L777 298M730 221L767 276M734 267L746 273M769 261L790 264M746 286L761 293H734M791 217L796 268L793 304L808 303M792 270L777 298M780 268H798M810 287H791M795 307H810" />
                </g>
                <g fill="#b9b6b2" stroke="#777" stroke-width=".6"><circle v-for="(p, i) in joints" :key="i" :cx="p[0]" :cy="p[1]" r="2.600" /></g>
                <g fill="#f0e62c" stroke="#a8a11e"><circle cx="769" cy="306" r="4.500" /><circle cx="788" cy="305" r="4.500" /><circle cx="807" cy="305" r="4.500" /></g>
                <path d="M788.500 281H794.500V287H788.500Z" fill="#777" stroke="#fff" stroke-width="1.600" />
                <path d="M824 266L827 269.500H825V272H828V270L831.500 273L828 276V274H825V277H827L824 280L821 277H823V274H820V276L816.500 273L820 270V272H823V269.500H821Z" fill="#111" stroke="#fff" />
                <path d="M333 478V448" stroke="#22e43a" stroke-width="1.500" /><path d="M330.500 456L333.500 440L336 456Z" fill="#22e43a" />
                <path d="M333 478L352 479" stroke="#c22" stroke-width="1.500" /><path d="M352 475L366 478L352 481Z" fill="#e02020" />
                <path d="M333 478L350 482L341 484Z" fill="#2222d8" stroke="#2222a8" />
                <g class="axis"><text x="334" y="434">Y</text><text x="371" y="479">X</text><text x="352" y="484" class="z">Z</text></g>
              </svg>
              <p class="info">Model Info: C:/Users/Finite/Desktop/vijendra/vij9.hm*</p>
            </div>
          </div>

          <div class="bar disp">
            <template v-for="(t, i) in displayA" :key="i">
              <span v-if="t[0] === '|'" :class="t.slice(1)"></span>
              <button v-else class="tool" :aria-label="t"><Icon :name="t" /></button>
            </template>
            <label class="combo"><Icon name="mode-geom" /><select aria-label="Geometry colour mode"><option>Mixed</option></select><span class="arrow"></span></label>
            <template v-for="(t, i) in displayB" :key="i">
              <span v-if="t[0] === '|'" :class="t.slice(1)"></span>
              <button v-else class="tool" :aria-label="t"><Icon :name="t" /></button>
            </template>
            <label class="combo"><Icon name="mode-elem" /><select aria-label="Element colour mode"><option>By Comp</option></select><span class="arrow"></span></label>
            <template v-for="(t, i) in displayC" :key="i">
              <span v-if="t[0] === '|'" :class="t.slice(1)"></span>
              <button v-else class="tool" :aria-label="t"><Icon :name="t" /></button>
            </template>
          </div>

          <div class="panel">
            <div class="picker">
              <button class="raised" aria-label="Entity type"><svg viewBox="0 0 12 12"><path d="M1 4H11L6 9Z" /></svg></button>
              <button class="yellow">surfs</button>
              <button class="raised" aria-label="Reset"><svg viewBox="0 0 12 12"><path d="M1 1H3V11H1ZM11 1V11L5 6Z" /></svg></button>
            </div>
            <label class="check solids"><input v-model="solids" type="checkbox">delete associated solids</label>
            <label class="check elems"><input v-model="elems" type="checkbox">delete associated elems</label>
            <button class="green mid r3" disabled>preview empty</button>
            <button class="green mid r4" disabled>preview unused</button>
            <button class="green end r1">delete entity</button>
            <button class="green end r4">reject</button>
            <button class="green end r5">delete model</button>
            <button class="return">return</button>
          </div>
        </section>

        <svg class="ink" viewBox="0 0 1280 720">
          <g fill="none" stroke="#b3161f" stroke-width="2" stroke-linecap="round">
            <path d="M297 41Q287 55 295 69" stroke-width="3" /><path d="M298 73L314 75" stroke-width="3" /><path d="M323 41H325M326 68H328" />
            <path d="M347 523L349 522M377 522L384 523M471 523H506" stroke-width="1" /><path d="M1180 523L1184 519L1194 519L1204 522L1212 523M1192 521L1203 523M1220 523H1231" />
          </g>
        </svg>
      </div>

      <footer class="status">
        <span class="msg">Delete Entities</span><span class="cell"></span>
        <span class="cell"><i></i>INNERSURFACXES</span><span class="cell"></span>
      </footer>

      <nav class="task">
        <button class="start" aria-label="Start"><svg viewBox="0 0 32 28"><defs><radialGradient id="orb" cx=".5" cy=".8" r=".8"><stop offset="0" stop-color="#5cd0f0" /><stop offset=".6" stop-color="#1e5f94" /><stop offset="1" stop-color="#23405f" /></radialGradient></defs><circle cx="16" cy="14" r="15" fill="url(#orb)" stroke="#31475e" /><path d="M3 10Q16 -8 29 10Q16 12 3 10" fill="#dce9f1" opacity=".35" /><path d="M10 7Q13 5 15 7L14 13Q11 11 8 13Z" fill="#f0703a" /><path d="M17 8Q20 10 23 8L22 14Q18 15 16 13Z" fill="#8fc63d" /><path d="M8 15Q11 13 14 15L12 21Q9 19 7 20Z" fill="#58a8e8" /><path d="M16 15Q18 17 21 16L20 22Q17 23 14 21Z" fill="#f6c83c" /></svg></button>
        <button v-for="t in taskbar" :key="t.icon" class="app-btn" :class="{ open: t.open, active: t.active }" :aria-label="t.label"><Icon :name="t.icon" /></button>
        <div class="tray">
          <Icon v-for="t in tray" :key="t" :name="t" />
          <time>PM 12:34</time>
          <button class="desk" aria-label="Show desktop"></button>
        </div>
      </nav>
    </div>
    <div class="edge"></div>
  </div>
</template>

<style>
body { margin: 0; background: #efefef; }
.ax { font: bold 8px "Liberation Sans", sans-serif; fill: #444; }
.num { font: bold 9px "Liberation Sans", sans-serif; fill: #444; }
</style>

<style scoped>
.defs { position: absolute; width: 0; height: 0; }
.screen { display: flex; min-height: 100vh; font: 10px "Liberation Sans", sans-serif; color: #111; }
.app { flex: 1; min-width: 0; display: flex; flex-direction: column; background: #efefef; }
.edge { width: 5px; background: linear-gradient(#0a0a0a 92px, transparent 92px, transparent 180px, #0a0a0a 180px, #0a0a0a 474px, transparent 474px), repeating-linear-gradient(#555 0 2px, #161616 2px 5px, #888 5px 7px); }
button { font: inherit; color: inherit; padding: 0; border: 0; background: none; }
a { color: inherit; text-decoration: none; }
p { margin: 0; }

.title { display: flex; align-items: center; height: 20px; padding-left: 2px; border-top: 1px solid #24374b; background: linear-gradient(#9db4d1, #bfd0e5); font: 11px "Open Sans", sans-serif; }
.title .i16 { width: 16px; height: 16px; margin-right: 6px; }
.win { margin-left: auto; display: flex; gap: 3px; align-self: flex-start; }
.win button { width: 28px; height: 16px; border: 1px solid #66788e; border-radius: 2px; background: linear-gradient(#cddaea 50%, #a8bbd1 50%); }
.win .close { width: 26px; background: linear-gradient(#dc9890 45%, #b94538 45%); border-color: #6b3a3a; }
.win svg { display: block; width: 100%; height: 100%; }

.menu { display: grid; grid-template-columns: 30px 31px 37px 63px 62px 40px 70px 58px 63px 32px 41px 40px 63px 78px 34px 51px 70px 75px auto; align-items: center; height: 18px; padding-left: 7px; background: linear-gradient(#fff, #e3e3f5); font: 11px/16px "Open Sans", sans-serif; white-space: nowrap; padding-bottom: 2px; box-sizing: border-box; }

.bar { display: flex; align-items: center; }
.top { height: 33px; box-sizing: border-box; border-top: 1px solid #ddd; padding-bottom: 3px; }
.tool { flex: none; width: 26px; height: 26px; display: grid; place-items: center; box-sizing: border-box; }
.tool.wide { width: 28px; }
.tool svg { width: 22px; height: 22px; }
.arrow { flex: none; width: 10px; height: 26px; display: grid; place-items: center; }
.arrow::before { content: ""; border: 3px solid transparent; border-top: 4px solid #111; border-bottom: 0; }
.sep { flex: none; width: 9px; height: 16px; background: linear-gradient(#aaa, #aaa) center / 1px 100% no-repeat; }
.grip { flex: none; width: 13px; height: 22px; background: repeating-linear-gradient(#222 0 2px, transparent 2px 6px) 6px 0 / 2px 100% no-repeat; }
.top .grip:first-child { width: 10px; background-position-x: 4px; }

.main { flex: 1; display: flex; min-height: 0; }
.browser { flex: none; width: 273px; box-sizing: border-box; padding: 2px 5px 1px 3px; border-right: 1px solid #888; display: flex; flex-direction: column; }
.tabs { display: flex; height: 20px; align-items: stretch; }
.tabs button { padding: 4px 8px 0; border-right: 1px solid #555; border-top: 1px solid #ddd; border-radius: 0 3px 0 0; }
.tabs button:nth-child(2) { padding: 4px 8px 0 11px; }
.tabs .on { padding: 2px 8px 0 9px; }
.tabs .x { margin-left: auto; align-self: flex-start; padding: 0; border: 0; }
.x svg { width: 8px; height: 8px; margin-top: -6px; display: block; }
.pane { flex: 1; display: flex; flex-direction: column; border-top: 1px solid #fff; border-right: 1px solid #777; border-bottom: 1px solid #777; }
.views { display: flex; gap: 1px; padding-left: 4px; height: 26px; }
.second { padding: 0 0 3px 3px; box-sizing: border-box; height: 28px; align-items: center; }
.second .tool:nth-child(n+7) { width: 28px; }
.lit { border: 1px solid #c9966a; background: linear-gradient(#f3d1aa, #f7b25e); }
.tree { flex: 1; display: flex; border-left: 1px solid #999; border-top: 1px solid #888; }
table { flex: 1; display: flex; flex-direction: column; background: #fff; }
thead { display: block; }
tbody { flex: 1; display: grid; grid-auto-rows: 1fr; padding-bottom: 9px; }
tr { display: grid; grid-template-columns: 1fr 24px 45px; align-items: center; }
thead tr { height: 17px; background: linear-gradient(#fff, #f1f1f1); border-bottom: 1px solid #ddd; }
tbody tr:nth-child(even) { background: #f2f2f2; }
th, td { padding: 0; font-weight: normal; text-align: left; }
.current td { font-weight: bold; }
.name { display: flex; align-items: center; align-self: stretch; white-space: nowrap; }
th.name { padding-left: 6px; }
th.id, td.id { text-align: right; }
th.sw, td.sw { padding-left: 10px; height: 11px; }
.g1 { align-self: stretch; margin-left: 9px; width: 17px; border-left: 1px dotted #999; }
.g2 { align-self: stretch; width: 8px; margin-right: 1px; border-left: 1px dotted #999; background: repeating-linear-gradient(90deg, #999 0 1px, transparent 1px 2px) 0 50% / 100% 1px no-repeat; }
.leaf { flex: none; width: 14px; height: 14px; margin-right: 5px; }
.leaf + span { margin-left: -1px; }
.pale { fill: #eeeef7; stroke: #d8d8e6; }
.solid { fill: #5e86d0; stroke: #2b4780; }
.pmesh { fill: #f1f1f1; stroke: #cfcfcf; }
.root { padding-left: 4px; }
.plus { width: 9px; height: 9px; margin: 0 4px 0 1px; }
.note { width: 17px; margin-right: 4px; }
.wheel { display: block; width: 13px; height: 13px; margin: -1px 0 0 1px; border-radius: 50%; background: conic-gradient(#e13b3b, #e6d22c, #39c94b, #2cc9d8, #3a43de, #d23ad0, #e13b3b); }
.swatch { display: block; width: 9px; height: 9px; border: 1px solid #111; background: #b8b8b8; }
.olive { background: #66731f; }
.blue { background: #0000f0; }
.scroll { width: 16px; background: #ededed; display: grid; grid-template-rows: 16px 259fr 235fr 16px; justify-items: center; align-items: center; }
.up { border: 3px solid transparent; border-bottom: 4px solid #333; border-top: 0; }
.thumb { grid-row: 3; width: 12px; height: 100%; box-sizing: border-box; border: 1px solid #8b8b8b; border-radius: 2px; background: repeating-linear-gradient(#555 0 1px, transparent 1px 3px) center / 6px 8px no-repeat, linear-gradient(90deg, #f6f6f6, #c9c9c9); }
.down { grid-row: 4; border: 3px solid transparent; border-top: 4px solid #333; border-bottom: 0; }

.work { flex: 1; min-width: 0; display: flex; flex-direction: column; padding: 0 5px 2px 0; }
.stage { flex: 1; display: flex; min-height: 0; }
.side { flex: none; width: 42px; padding-top: 3px; box-sizing: border-box; display: flex; flex-direction: column; align-items: center; }
.hgrip { width: 24px; height: 8px; margin-left: 4px; background: repeating-linear-gradient(90deg, #222 0 2px, transparent 2px 7px) 0 1px / 100% 2px no-repeat; }
.viewport { position: relative; flex: 1; min-height: 422px; background: linear-gradient(#34516f, #45597a 18%, #5d6a7c 42%, #7c8188 65%, #929292 82%, #9c9c9c); }
.scene { position: absolute; inset: 0; width: 100%; height: 100%; }
.axis { fill: #eee; font: 12px "Liberation Sans", sans-serif; }
.axis .z { font-size: 9px; }
.info { position: relative; padding: 8px 5px 0 0; text-align: right; font-size: 12px; line-height: 16px; color: #dbe9f2; }

.disp { height: 30px; }
.disp .sep { width: 11px; }
.combo { display: flex; align-items: center; height: 20px; width: 92px; background: #fff; position: relative; }
.sep + .combo { width: 97px; }
.combo > svg { width: 18px; height: 18px; background: #efefef; }
.combo select { flex: 1; min-width: 0; appearance: none; border: 0; padding: 0 0 0 2px; background: none; font: inherit; color: inherit; }
.combo .arrow { width: 14px; height: 20px; background: #f2f2f2; }

.panel { display: grid; grid-template-columns: 492fr 210fr 96fr 183fr; grid-template-rows: repeat(7, 19px); padding: 7px 13px 2px 3px; border-bottom: 1px solid #999; font-size: 13px; }
.picker { grid-area: 1 / 1; display: flex; }
.raised { width: 27px; border-right: 1px solid #777; border-bottom: 1px solid #777; }
.raised svg { width: 12px; height: 12px; display: block; margin: auto; }
.yellow { width: 141px; border: 2px solid #4fd8dc; background: #e6e26b; font-size: 12px; line-height: 14px; }
.check { grid-column: 1; display: flex; align-items: center; gap: 7px; padding: 0 0 2px 7px; }
.solids { grid-row: 5; }
.elems { grid-row: 6; }
.check input { appearance: none; margin: 0; width: 14px; height: 14px; background: #fff; border: 1px solid #ddd; border-top: 2px solid #666; border-left: 2px solid #666; }
.green { background: #6dbe6d; border-right: 2px solid #3d6b3d; border-bottom: 2px solid #2f6a35; border-top: 1px solid #86cc86; line-height: 16px; }
.green:disabled { color: #2b8038; text-shadow: 1px 1px #93d893; }
.mid { grid-column: 2; }
.end { grid-column: 4; }
.r1 { grid-row: 1; }
.r3 { grid-row: 3; }
.r4 { grid-row: 4; }
.r5 { grid-row: 5; }
.return { grid-area: 7 / 4; justify-self: end; width: 78px; border: 2px solid #2b1214; outline: 1px solid #9b4a50; outline-offset: -1px; background: #c1686e; line-height: 14px; }
.ink { position: absolute; top: 0; left: 0; width: 1280px; height: 720px; pointer-events: none; }

.status { display: grid; grid-template-columns: 1fr 118px 134px 126px; height: 24px; align-items: center; font-size: 12px; box-sizing: border-box; }
.msg { padding-left: 13px; }
.cell { height: 17px; margin-right: 2px; border-top: 1px solid #333; border-left: 1px solid #333; display: flex; align-items: center; gap: 4px; padding-left: 4px; overflow: hidden; }
.cell:last-child { margin-right: 0; }
.cell i { flex: none; width: 9px; height: 9px; background: #0000e8; }

.task { display: flex; height: 28px; box-sizing: border-box; border-top: 1px solid #4d6078; background: linear-gradient(90deg, #a9bdd8, #8397ad 5%, #a9bedb 14%, #abc0dd 80%, #74859a 86%, #7b8794); }
.start { width: 53px; padding-left: 8px; }
.start svg { width: 34px; height: 28px; display: block; }
.app-btn { width: 43px; display: grid; place-items: center; border: 1px solid transparent; box-sizing: border-box; }
.app-btn svg { width: 18px; height: 18px; }
.open { border-color: #56687f; border-radius: 2px; background: linear-gradient(#d6e2f0, #a9bdd8); box-shadow: inset 0 0 0 1px #dfe9f4; }
.active { background: linear-gradient(#d4e9f5, #a0dbf2); }
.tray { margin-left: auto; display: flex; align-items: center; color: #fff; }
.tray svg { width: 17px; height: 17px; margin: 0 3px; }
.tray time { margin: 0 8px 0 12px; font: 11px "Open Sans", sans-serif; }
.desk { align-self: stretch; width: 9px; border-left: 1px solid #47525f; background: #7e8a98; }
</style>
